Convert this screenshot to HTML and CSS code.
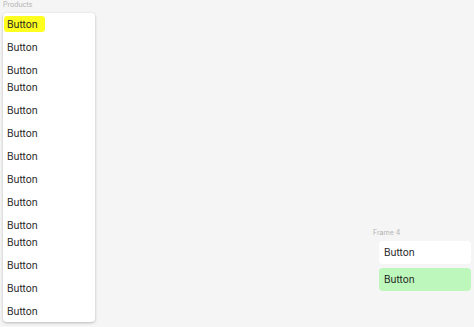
FILE: index.html
```html
<!DOCTYPE html>
<html lang="en">
<head>
    <meta charset="UTF-8">
    <meta name="viewport" content="width=device-width, initial-scale=1.0">
    <title>Products</title>
    <link rel="stylesheet" href="styles.css">
</head>
<body>
    <div class="canvas">
        <div class="products">
            <div class="frame-label">Products</div>
            <div class="list">
                <div class="item"><span class="mark">Button</span></div>
                <div class="item">Button</div>
                <div class="item">Button</div>
                <div class="item tight">Button</div>
                <div class="item">Button</div>
                <div class="item">Button</div>
                <div class="item">Button</div>
                <div class="item">Button</div>
                <div class="item">Button</div>
                <div class="item">Button</div>
                <div class="item tight">Button</div>
                <div class="item">Button</div>
                <div class="item">Button</div>
                <div class="item">Button</div>
            </div>
        </div>
        <div class="frame4">
            <div class="frame-label">Frame 4</div>
            <div class="frame-body">
                <div class="btn">Button</div>
                <div class="btn green">Button</div>
            </div>
        </div>
    </div>
</body>
</html>
```

FILE: styles.css
```css
body {
    margin: 0;
    background-color: #f5f5f5;
    font-family: Inter, "Noto Sans", sans-serif;
    color: #1e1e1e;
}
.canvas {
    display: flex;
    justify-content: space-between;
    height: 327px;
    padding: 0 3px 0 3px;
    box-sizing: border-box;
}
.frame-label {
    font-size: 7px;
    color: #b3b3b3;
    line-height: 9px;
}
.products .frame-label {
    height: 13px;
}
.list {
    width: 92px;
    height: 309px;
    background-color: white;
    border-radius: 4px;
    box-shadow: 0 1px 3px rgba(0, 0, 0, 0.25);
}
.item {
    height: 23px;
    line-height: 23px;
    font-size: 10px;
    padding-left: 4px;
}
.item.tight {
    margin-top: -6px;
}
.mark {
    background-color: #ffff20;
    margin-left: -3px;
    padding: 2px 7px 2px 3px;
    border-radius: 3px;
}
.frame4 {
    align-self: flex-end;
    margin-bottom: 36px;
    width: 98px;
}
.frame4 .frame-label {
    height: 13px;
}
.frame-body {
    padding-left: 6px;
    display: flex;
    flex-direction: column;
    gap: 4px;
}
.btn {
    height: 23px;
    line-height: 23px;
    font-size: 10px;
    padding-left: 5px;
    background-color: white;
    border-radius: 4px;
}
.btn.green {
    background-color: #bdf7bc;
}
```
